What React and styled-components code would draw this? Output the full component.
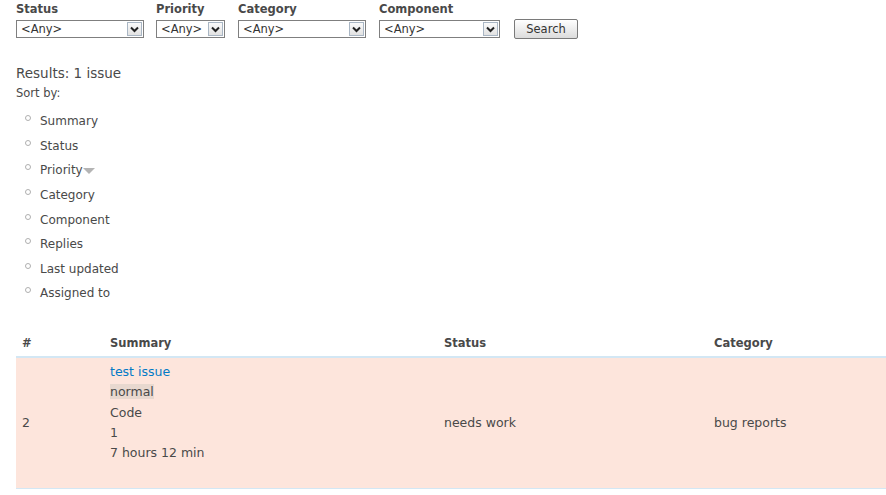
import React from 'react';
import styled, { createGlobalStyle } from 'styled-components';

const GlobalStyle = createGlobalStyle`
  html, body {
    margin: 0;
    padding: 0;
    background: #fff;
  }
  body {
    font-family: 'DejaVu Sans', Verdana, sans-serif;
    font-size: 12px;
    color: #494949;
  }
`;

const filters = [
  { id: 'status', label: 'Status', width: 128, gap: 12 },
  { id: 'priority', label: 'Priority', width: 69, gap: 13 },
  { id: 'category', label: 'Category', width: 128, gap: 13 },
  { id: 'component', label: 'Component', width: 121, gap: 14 },
];

const sortLinks = [
  'Summary',
  'Status',
  'Priority',
  'Category',
  'Component',
  'Replies',
  'Last updated',
  'Assigned to',
];

const Page = styled.div`
  padding: 2px 0 0 16px;
`;

const FilterBar = styled.form`
  display: flex;
  align-items: flex-end;
  margin: 0;
`;

const Field = styled.div`
  display: flex;
  flex-direction: column;
  margin-right: ${(p) => p.$gap}px;
`;

const Label = styled.label`
  font-weight: bold;
  font-size: 11.5px;
  line-height: 15px;
  margin-bottom: 3px;
  color: #494949;
`;

const Select = styled.div`
  box-sizing: border-box;
  width: ${(p) => p.$width}px;
  height: 18px;
  border: 1px solid #7f7f7f;
  background: #fff;
  display: flex;
  align-items: center;
  justify-content: space-between;
  padding: 0 1px 0 4px;
  font-size: 11.5px;
  color: #333;
`;

const Arrow = styled.span`
  box-sizing: border-box;
  width: 15px;
  height: 14px;
  border: 1px solid #a9b6c4;
  background: linear-gradient(#fafafa, #e2e2e2);
  display: flex;
  align-items: center;
  justify-content: center;
`;

const Button = styled.button`
  box-sizing: border-box;
  width: 64px;
  height: 20px;
  margin: 0 0 -1px 0;
  border: 1px solid #7a7a7a;
  border-radius: 2px;
  background: linear-gradient(#ffffff, #dcdcdc);
  font-family: inherit;
  font-size: 11.5px;
  color: #333;
  padding: 0;
`;

const Results = styled.h3`
  margin: 25px 0 0;
  font-size: 13.5px;
  font-weight: normal;
  line-height: 20px;
`;

const SortLabel = styled.div`
  font-size: 11.5px;
  line-height: 20px;
`;

const SortList = styled.ul`
  list-style: none;
  margin: 6px 0 0;
  padding: 0 0 0 9px;
`;

const SortItem = styled.li`
  display: flex;
  align-items: center;
  height: 24.6px;
  font-size: 12px;
  &::before {
    content: '';
    box-sizing: border-box;
    width: 6px;
    height: 6px;
    border: 1px solid #b0b0b0;
    border-radius: 50%;
    margin: -6px 9px 0 0;
  }
`;

const SortTriangle = styled.span`
  width: 0;
  height: 0;
  border-left: 6px solid transparent;
  border-right: 6px solid transparent;
  border-top: 6px solid #b4b4b4;
  margin: 1px 0 0 0;
`;

const Table = styled.table`
  width: 870px;
  margin-top: 23px;
  border-collapse: collapse;
  font-size: 12.5px;
`;

const Th = styled.th`
  text-align: left;
  font-size: 11.5px;
  font-weight: bold;
  padding: 6px 6px 5px;
  line-height: 16px;
  border-bottom: 2px solid #d3e7f4;
  width: ${(p) => p.$width}px;
`;

const Tr = styled.tr`
  background: #fde5dc;
  border-bottom: 1px solid #d3e7f4;
`;

const Td = styled.td`
  padding: 4px 6px;
  vertical-align: middle;
  line-height: 20.4px;
`;

const IssueLink = styled.a`
  color: #027ac6;
  text-decoration: none;
`;

const Tag = styled.span`
  background: #e8d8cf;
`;

const SelectArrow = () => (
  <svg width="9" height="7" viewBox="0 0 9 7">
    <path d="M1 1.5 L4.5 5 L8 1.5" fill="none" stroke="#222" strokeWidth="2" />
  </svg>
);

const App = () => {
  return (
    <>
      <GlobalStyle />
      <Page>
        <FilterBar>
          {filters.map((f) => (
            <Field key={f.id} $gap={f.gap}>
              <Label>{f.label}</Label>
              <Select $width={f.width}>
                <span>&lt;Any&gt;</span>
                <Arrow>
                  <SelectArrow />
                </Arrow>
              </Select>
            </Field>
          ))}
          <Button type="button">Search</Button>
        </FilterBar>

        <Results>Results: 1 issue</Results>
        <SortLabel>Sort by:</SortLabel>
        <SortList>
          {sortLinks.map((name) => (
            <SortItem key={name}>
              {name}
              {name === 'Priority' && <SortTriangle />}
            </SortItem>
          ))}
        </SortList>

        <Table>
          <thead>
            <tr>
              <Th $width={76}>#</Th>
              <Th $width={322}>Summary</Th>
              <Th $width={258}>Status</Th>
              <Th>Category</Th>
            </tr>
          </thead>
          <tbody>
            <Tr>
              <Td>2</Td>
              <Td>
                <div>
                  <IssueLink href="#">test issue</IssueLink>
                </div>
                <div>
                  <Tag>normal</Tag>
                </div>
                <div>Code</div>
                <div>1</div>
                <div>7 hours 12 min</div>
                <div>&nbsp;</div>
              </Td>
              <Td>needs work</Td>
              <Td>bug reports</Td>
            </Tr>
          </tbody>
        </Table>
      </Page>
    </>
  );
};

export default App;
